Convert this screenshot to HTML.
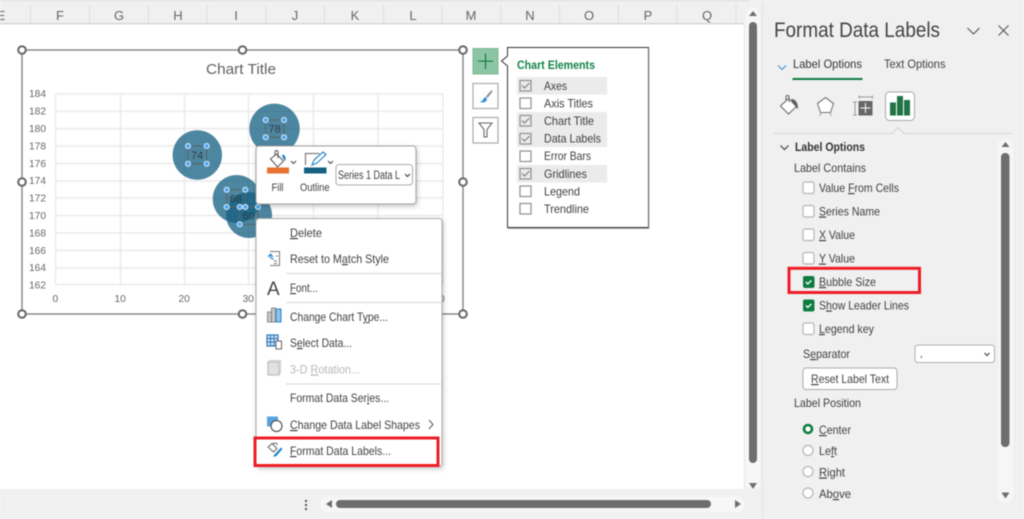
<!DOCTYPE html>
<html><head><meta charset="utf-8"><style>
html,body{margin:0;padding:0;background:#fff;width:1024px;height:519px;overflow:hidden}
svg{display:block;filter:blur(.4px)}
text{font-family:"Liberation Sans",Arial,sans-serif;font-size:11.8px;fill:#404040}
.h{font-size:13px;fill:#666;text-anchor:middle}
.a{font-size:10.2px;fill:#666}
.u{text-decoration:underline}
.g{stroke:#e7e7e7;stroke-width:1.2;fill:none}
.hd{fill:#fff;stroke:#666;stroke-width:2}
.dh2{fill:#4aa5f5;stroke:#e2f1ff;stroke-width:1}
.cb{fill:#fff;stroke:#b5b5b5;stroke-width:1.2}
.ck{fill:none;stroke:#777;stroke-width:1}
.sep{stroke:#ddd;stroke-width:1.2}
</style></head><body>
<svg width="1024" height="519" viewBox="0 0 1024 519" xmlns="http://www.w3.org/2000/svg">
<defs>
<filter id="sh" x="-10%" y="-10%" width="120%" height="125%"><feDropShadow dx="1" dy="2" stdDeviation="2.5" flood-color="#000" flood-opacity=".22"/></filter>
</defs>
<rect width="1024" height="519" fill="#f0f0f0"/>
<rect x="0" y="24" width="743.500" height="465" fill="#fff"/>
<rect x="0" y="0" width="750" height="1.2" fill="#dcdcdc"/>
<rect x="0" y="23" width="743.500" height="1.3" fill="#d4d4d4"/>
<g stroke="#dedede" stroke-width="1">
<path d="M30.5 5V23M89.5 5V23M148.5 5V23M207 5V23M266 5V23M324.5 5V23M383.5 5V23M442 5V23M501 5V23M559.5 5V23M618.5 5V23M677 5V23M736 5V23"/>
</g>
<text class="h" x="1" y="20">E</text><text class="h" x="60" y="20">F</text><text class="h" x="119" y="20">G</text><text class="h" x="178" y="20">H</text><text class="h" x="236" y="20">I</text><text class="h" x="295" y="20">J</text><text class="h" x="355" y="20">K</text><text class="h" x="413" y="20">L</text><text class="h" x="471" y="20">M</text><text class="h" x="530" y="20">N</text><text class="h" x="589" y="20">O</text><text class="h" x="648" y="20">P</text><text class="h" x="707" y="20">Q</text>

<!-- sheet scrollbars -->
<rect x="746" y="8" width="14" height="482" rx="7" fill="#f7f7f7"/>
<path d="M753 11l4 5h-8z" fill="#6e6e6e"/>
<rect x="749" y="22" width="8" height="441" rx="4" fill="#6e6e6e"/>
<path d="M753 489l4-6h-8z" fill="#6e6e6e"/>
<rect x="762" y="0" width="1" height="519" fill="#e2e2e2"/>
<rect x="320" y="497" width="425" height="15" rx="7" fill="#f7f7f7"/>
<path d="M326 504l6-4v8z" fill="#6e6e6e"/>
<rect x="336" y="500" width="375" height="8" rx="4" fill="#6e6e6e"/>
<path d="M741 504l-6-4v8z" fill="#6e6e6e"/>
<g fill="#555"><rect x="305" y="500" width="2" height="2"/><rect x="305" y="504" width="2" height="2"/><rect x="305" y="508" width="2" height="2"/></g>

<!-- chart -->
<rect x="22" y="50" width="441" height="264" fill="#fff" stroke="#7c7c7c" stroke-width="1.3"/>
<path class="g" d="M55.5 94H443M55.5 111.300H443M55.500 128.600H443M55.500 146H443M55.500 163.500H443M55.500 181H443M55.500 198H443M55.500 215.500H443M55.500 233H443M55.500 250.500H443M55.500 268H443M55.500 284.500H443M55.500 94V284.500M120.500 94V284.500M184.500 94V284.500M248.500 94V284.500M313.500 94V284.500M378 94V284.500M443 94V284.500"/>
<text x="206" y="74" textLength="70" lengthAdjust="spacingAndGlyphs" style="font-size:15px;fill:#606060">Chart Title</text>
<text class="a" x="29" y="97">184</text><text class="a" x="29" y="114.500">182</text><text class="a" x="29" y="132">180</text><text class="a" x="29" y="149.500">178</text><text class="a" x="29" y="167">176</text><text class="a" x="29" y="184">174</text><text class="a" x="29" y="201.500">172</text><text class="a" x="29" y="219">170</text><text class="a" x="29" y="236.500">168</text><text class="a" x="29" y="254">166</text><text class="a" x="29" y="271">164</text><text class="a" x="29" y="288.500">162</text>
<text class="a" x="52.500" y="302">0</text><text class="a" x="114.500" y="302">10</text><text class="a" x="178.500" y="302">20</text><text class="a" x="242.500" y="302">30</text><text class="a" x="439" y="302">0</text>
<g fill="#156082" fill-opacity=".76">
<circle cx="197.300" cy="155" r="24.700"/><circle cx="274.500" cy="128.800" r="25.200"/><circle cx="236.700" cy="199" r="24"/><circle cx="249" cy="215" r="23"/>
</g>
<g fill="none" stroke="#5b6168" stroke-width="1">
<rect x="188" y="146" width="18.700" height="17.700"/><rect x="265.700" y="120" width="18.300" height="17.300"/><rect x="226.700" y="189.700" width="18.600" height="17.300"/><rect x="239.700" y="207" width="18.300" height="17.300"/>
</g>
<text x="191" y="159" style="font-size:11px;fill:#2f3b42">74</text><text x="268.500" y="132.500" style="font-size:11px;fill:#2f3b42">78</text><text x="229.500" y="202.500" style="font-size:11px;fill:#2f3b42">68</text><text x="242.500" y="219.500" style="font-size:11px;fill:#2f3b42">60</text>
<g class="dh2">
<circle cx="188" cy="146" r="2.500"/><circle cx="206.700" cy="146" r="2.500"/><circle cx="188" cy="163.700" r="2.500"/><circle cx="206.700" cy="163.700" r="2.500"/>
<circle cx="265.700" cy="120" r="2.500"/><circle cx="284" cy="120" r="2.500"/><circle cx="265.700" cy="137.300" r="2.500"/><circle cx="284" cy="137.300" r="2.500"/>
<circle cx="226.700" cy="189.700" r="2.500"/><circle cx="245.300" cy="189.700" r="2.500"/><circle cx="226.700" cy="207" r="2.500"/><circle cx="245.300" cy="207" r="2.500"/>
<circle cx="239.700" cy="207" r="2.500"/><circle cx="258" cy="207" r="2.500"/><circle cx="239.700" cy="224.300" r="2.500"/>
</g>
<g class="hd">
<circle cx="22" cy="50" r="3.800"/><circle cx="242.500" cy="50" r="3.800"/><circle cx="463" cy="50" r="3.800"/><circle cx="22" cy="182" r="3.800"/><circle cx="463" cy="182" r="3.800"/><circle cx="22" cy="314" r="3.800"/><circle cx="242.500" cy="314" r="3.800"/><circle cx="463" cy="314" r="3.800"/>
</g>

<!-- chart side buttons -->
<rect x="473" y="48.500" width="25" height="25.500" fill="#8cc5a3" stroke="#7cb896"/>
<path d="M485.500 53.500V69M478 61.200H493" stroke="#137a45" stroke-width="1.200" fill="none"/>
<rect x="473" y="83.500" width="25" height="25" fill="#fff" stroke="#aaa" stroke-width="1.200"/>
<path d="M491.500 90l-5.500 6.500 1.500 1.500 5-6.500z" fill="#8a8a8a"/>
<path d="M485.500 97c-2 .5-2 3-3.500 4-1 .7-2 .7-2.500.7 1.500 1 5.500 1.200 7-1 .8-1.200.3-2.700-1-3.700z" fill="#2f8fdc"/>
<rect x="473" y="117.500" width="25" height="25.500" fill="#fff" stroke="#aaa" stroke-width="1.200"/>
<path d="M479 123h13l-5 6.500v7.500h-3v-7.500z" fill="#fff" stroke="#666" stroke-width="1.100"/>

<!-- chart elements -->
<path d="M507.500 47.500H648.500V227.500H507.500V66l-6-5 6-5z" fill="#fff" stroke="#333" stroke-width="1"/>
<path d="M649 48V228.500H508" fill="none" stroke="#aaa" stroke-width="1"/>
<text x="517" y="69" textLength="78" lengthAdjust="spacingAndGlyphs" style="font-size:11.500px;font-weight:bold;fill:#13834a">Chart Elements</text>
<g fill="#ebebeb"><rect x="517" y="77" width="90" height="17.500"/><rect x="517" y="112" width="90" height="35"/><rect x="517" y="165" width="90" height="17.500"/></g>
<g class="cb" style="stroke:#8f8f8f">
<rect x="520" y="80.500" width="11" height="10.500" style="fill:#ebebeb"/><rect x="520" y="98" width="11" height="10.500"/><rect x="520" y="115.500" width="11" height="10.500" style="fill:#ebebeb"/><rect x="520" y="133.500" width="11" height="10.500" style="fill:#ebebeb"/><rect x="520" y="151" width="11" height="10.500"/><rect x="520" y="168.500" width="11" height="10.500" style="fill:#ebebeb"/><rect x="520" y="186" width="11" height="10.500"/><rect x="520" y="203.500" width="11" height="10.500"/>
</g>
<g class="ck"><path d="M522 85.500l2.500 2.500 5-5M522 120.500l2.500 2.500 5-5M522 138.500l2.500 2.500 5-5M522 173.500l2.500 2.500 5-5"/></g>
<text x="544" y="90" textLength="23" lengthAdjust="spacingAndGlyphs">Axes</text>
<text x="544" y="107.500" textLength="49" lengthAdjust="spacingAndGlyphs">Axis Titles</text>
<text x="544" y="125" textLength="50" lengthAdjust="spacingAndGlyphs">Chart Title</text>
<text x="544" y="142.500" textLength="57" lengthAdjust="spacingAndGlyphs">Data Labels</text>
<text x="544" y="160" textLength="47" lengthAdjust="spacingAndGlyphs">Error Bars</text>
<text x="544" y="178" textLength="43" lengthAdjust="spacingAndGlyphs">Gridlines</text>
<text x="544" y="195.500" textLength="36" lengthAdjust="spacingAndGlyphs">Legend</text>
<text x="544" y="213" textLength="45" lengthAdjust="spacingAndGlyphs">Trendline</text>

<!-- mini toolbar -->
<rect x="256" y="146" width="160" height="58" rx="3" fill="#fff" stroke="#a0a0a0" filter="url(#sh)"/>
<path d="M270.500 159l6-5 7 7-6 6z" fill="#fff" stroke="#555" stroke-width="1"/>
<path d="M275 156v-4a1.500 1.500 0 0 1 3 0v6" fill="none" stroke="#555" stroke-width="1"/>
<path d="M282 155c3-1 4 2 3.500 6-1.500-1-3-3-3.500-6z" fill="#2d86c9"/>
<rect x="267" y="167.500" width="22" height="6" fill="#e97132"/>
<path d="M291 161l2.500 2.500 2.500-2.500M328 161l2.500 2.500 2.500-2.500" fill="none" stroke="#444" stroke-width="1"/>
<path d="M305.500 165v-11.500h14" fill="none" stroke="#666" stroke-width="1"/>
<path d="M312 165l2-5 9-8 3 2.500-9 8.500z" fill="#fff" stroke="#2d86c9" stroke-width="1.200"/>
<rect x="304" y="167.500" width="22.500" height="6" fill="#156082"/>
<text x="271.500" y="191" textLength="12" lengthAdjust="spacingAndGlyphs" style="font-size:11px">Fill</text>
<text x="300" y="191" textLength="29.500" lengthAdjust="spacingAndGlyphs" style="font-size:11px">Outline</text>
<rect x="336" y="164.500" width="76.500" height="20.500" rx="3" fill="#fff" stroke="#aaa"/>
<text x="338" y="179" textLength="62" lengthAdjust="spacingAndGlyphs" style="font-size:11.500px">Series 1 Data L</text>
<path d="M405 174l2.500 2.500 2.500-2.500" fill="none" stroke="#444" stroke-width="1.200"/>

<!-- context menu -->
<rect x="256" y="218.500" width="186" height="248" rx="3" fill="#fff" stroke="#a8a8a8" filter="url(#sh)"/>
<path class="sep" d="M286 273.500H441M286 302.500H441M286 384H441"/>
<text x="290" y="237" textLength="32" lengthAdjust="spacingAndGlyphs"><tspan class="u">D</tspan>elete</text>
<text x="290" y="263" textLength="99" lengthAdjust="spacingAndGlyphs">Reset to M<tspan class="u">a</tspan>tch Style</text>
<text x="290" y="292" textLength="28" lengthAdjust="spacingAndGlyphs"><tspan class="u">F</tspan>ont...</text>
<text x="290" y="321" textLength="98" lengthAdjust="spacingAndGlyphs">Change Chart T<tspan class="u">y</tspan>pe...</text>
<text x="290" y="347" textLength="62" lengthAdjust="spacingAndGlyphs">S<tspan class="u">e</tspan>lect Data...</text>
<text x="290" y="373.500" textLength="70" lengthAdjust="spacingAndGlyphs" style="fill:#b8b8b8">3-D <tspan class="u">R</tspan>otation...</text>
<text x="290" y="402" textLength="99" lengthAdjust="spacingAndGlyphs">Format Data Ser<tspan class="u">i</tspan>es...</text>
<text x="290" y="429" textLength="130" lengthAdjust="spacingAndGlyphs"><tspan class="u">C</tspan>hange Data Label Shapes</text>
<text x="290" y="455" textLength="101" lengthAdjust="spacingAndGlyphs"><tspan class="u">F</tspan>ormat Data Labels...</text>
<path d="M429 420l4 4.500-4 4.500" fill="none" stroke="#555" stroke-width="1"/>
<!-- menu icons -->
<path d="M270 251.500h9.500v14h-9.500" fill="#fff" stroke="#777" stroke-width="1"/>
<path d="M268 257l2.500-3 2.500 3M270.500 254v3c0 1.500 2 2 3.500 2" fill="none" stroke="#2d86c9" stroke-width="1.100"/>
<path d="M274 261h3M274 263.500h3M276 256h2" stroke="#777" stroke-width="1"/>
<text x="267" y="295" style="font-size:19px;fill:#444">A</text>
<rect x="267.500" y="312" width="4" height="10" fill="#c8c8c8" stroke="#777" stroke-width=".8"/><rect x="271.500" y="308" width="4" height="14" fill="#c8c8c8" stroke="#777" stroke-width=".8"/><rect x="276" y="309" width="5" height="13" fill="#8fc2e8" stroke="#2d86c9" stroke-width="1"/>
<rect x="267" y="335" width="11" height="11" fill="#cfe4f5" stroke="#2d78b5" stroke-width="1.200"/><path d="M267 338.500h11M267 342h11M270.500 335v11M274 335v11" stroke="#2d78b5" stroke-width="1"/><rect x="276" y="341" width="5.500" height="8" fill="#fff" stroke="#666"/>
<rect x="268" y="362" width="11" height="13" fill="#e2e2e2" stroke="#bdbdbd" stroke-width="1.200"/><path d="M268 362l2-1.500h10.500v12l-1.500 2.500" fill="none" stroke="#c8c8c8"/>
<rect x="267" y="416.500" width="11" height="10" fill="#5ba3dc"/><circle cx="276.500" cy="426" r="5.500" fill="#fff" stroke="#555" stroke-width="1.200"/>
<path d="M268 447l4-3.500 5 5-3.500 3.500z" fill="#fff" stroke="#666" stroke-width="1"/><path d="M274 455l7-7.500 1.500 1.500-6 7-3.500 1z" fill="#2d86c9"/><path d="M271 444l5-1 1.500 2" fill="none" stroke="#666"/>
<rect x="255" y="438" width="183" height="27.500" fill="none" stroke="#ee1c25" stroke-width="3"/>

<!-- panel -->
<text x="774" y="37" textLength="166" lengthAdjust="spacingAndGlyphs" style="font-size:21px;fill:#444">Format Data Labels</text>
<path d="M967.500 28l6 6 6-6M998.500 25.500l10 10M1008.500 25.500l-10 10" fill="none" stroke="#555" stroke-width="1.100"/>
<path d="M778 65.500l4 4 4-4" fill="none" stroke="#3f9ae0" stroke-width="1.200"/>
<text x="793" y="68" textLength="69" lengthAdjust="spacingAndGlyphs" style="fill:#333">Label Options</text>
<text x="884" y="68" textLength="61.500" lengthAdjust="spacingAndGlyphs">Text Options</text>
<rect x="792.500" y="78" width="70" height="2" fill="#0e7a43"/>
<!-- panel icons -->
<path d="M780.500 106l8-7.500 8 8-8 7.500z" fill="#fff" stroke="#666" stroke-width="1"/>
<path d="M786 101v-4a1.500 1.500 0 0 1 3 0v5" fill="none" stroke="#666"/>
<path d="M791 99c5 0 7 4 7 10-2.500-2-5-5-7-10z" fill="#5f5f5f"/>
<path d="M825.500 97.500l8 6-3 9h-10l-3-9z" fill="#fff" stroke="#777" stroke-width="1.100"/>
<path d="M821 113l-1.500 3M830 113l1.500 3" stroke="#aaa"/>
<rect x="858.500" y="101" width="14" height="14.500" fill="#666"/>
<path d="M865.500 103v10M860.500 108h10" stroke="#fff" stroke-width="1"/>
<path d="M859 97h13.500M859 95.500v3M872.500 95.500v3M855 102v13M853 102h4M853 115h4" fill="none" stroke="#999" stroke-width="1"/>
<rect x="885.500" y="92" width="29" height="28.500" rx="4" fill="#fff" stroke="#a8a8a8"/>
<g fill="#217346"><rect x="890" y="102.500" width="6" height="13"/><rect x="897" y="96" width="6" height="19.500"/><rect x="904" y="100" width="6" height="15.500"/></g>
<path d="M773 133.500H892l6-6 6 6H1012" fill="none" stroke="#d6d6d6"/>
<rect x="998" y="138" width="15.500" height="365" rx="7" fill="#f6f6f6"/>
<path d="M1005.500 142l4 5h-8z" fill="#6e6e6e"/>
<rect x="1001" y="153" width="8.500" height="294" rx="4" fill="#6e6e6e"/>
<path d="M1005.500 498.500l4-6h-8z" fill="#6e6e6e"/>
<path d="M780.500 145.500l4 4 4-4" fill="none" stroke="#444" stroke-width="1.200"/>
<text x="795" y="151" textLength="70" lengthAdjust="spacingAndGlyphs" style="font-weight:bold;fill:#333">Label Options</text>
<text x="794" y="172" textLength="72" lengthAdjust="spacingAndGlyphs">Label Contains</text>
<g class="cb">
<rect x="803" y="182" width="11" height="11.500" rx="2"/><rect x="803" y="205.500" width="11" height="11.500" rx="2"/><rect x="803" y="229" width="11" height="11.500" rx="2"/><rect x="803" y="252.500" width="11" height="11.500" rx="2"/><rect x="803" y="323" width="11" height="11.500" rx="2"/>
</g>
<rect x="803" y="276" width="11.500" height="12" rx="2" fill="#107c41"/><rect x="803" y="299.500" width="11.500" height="12" rx="2" fill="#107c41"/>
<path d="M805.800 282l2 2 3.500-3.500M805.800 305.500l2 2 3.500-3.500" fill="none" stroke="#fff" stroke-width="1.300"/>
<text x="819" y="192" textLength="80" lengthAdjust="spacingAndGlyphs">Value <tspan class="u">F</tspan>rom Cells</text>
<text x="819" y="215.500" textLength="61" lengthAdjust="spacingAndGlyphs"><tspan class="u">S</tspan>eries Name</text>
<text x="819" y="239" textLength="36" lengthAdjust="spacingAndGlyphs"><tspan class="u">X</tspan> Value</text>
<text x="819" y="262.500" textLength="36" lengthAdjust="spacingAndGlyphs"><tspan class="u">Y</tspan> Value</text>
<text x="819" y="286" textLength="57" lengthAdjust="spacingAndGlyphs"><tspan class="u">B</tspan>ubble Size</text>
<text x="819" y="309.500" textLength="90" lengthAdjust="spacingAndGlyphs">S<tspan class="u">h</tspan>ow Leader Lines</text>
<text x="819" y="333" textLength="55" lengthAdjust="spacingAndGlyphs"><tspan class="u">L</tspan>egend key</text>
<rect x="789" y="268.300" width="130.500" height="24.200" fill="none" stroke="#ee1c25" stroke-width="3"/>
<text x="803" y="358" textLength="47" lengthAdjust="spacingAndGlyphs">S<tspan class="u">e</tspan>parator</text>
<rect x="915" y="345" width="79.500" height="17.500" rx="3" fill="#fff" stroke="#b0b0b0"/>
<text x="920" y="357" style="font-size:10px">,</text>
<path d="M984.500 353l2.500 2.500 2.500-2.500" fill="none" stroke="#444" stroke-width="1.200"/>
<rect x="803" y="368" width="94" height="21.500" rx="3" fill="#fff" stroke="#aaa"/>
<text x="811" y="383" textLength="78" lengthAdjust="spacingAndGlyphs"><tspan class="u">R</tspan>eset Label Text</text>
<text x="794" y="407" textLength="67" lengthAdjust="spacingAndGlyphs">Label Position</text>
<circle cx="808" cy="429" r="4" fill="#fff" stroke="#107c41" stroke-width="2.600"/>
<g class="cb"><circle cx="808" cy="450.500" r="5"/><circle cx="808" cy="471.500" r="5"/><circle cx="808" cy="493" r="5"/></g>
<text x="819" y="434" textLength="32" lengthAdjust="spacingAndGlyphs"><tspan class="u">C</tspan>enter</text>
<text x="819" y="455" textLength="18" lengthAdjust="spacingAndGlyphs">Le<tspan class="u">f</tspan>t</text>
<text x="819" y="476.500" textLength="26" lengthAdjust="spacingAndGlyphs"><tspan class="u">R</tspan>ight</text>
<text x="819" y="498" textLength="32" lengthAdjust="spacingAndGlyphs">Ab<tspan class="u">o</tspan>ve</text>
</svg>
</body></html>
